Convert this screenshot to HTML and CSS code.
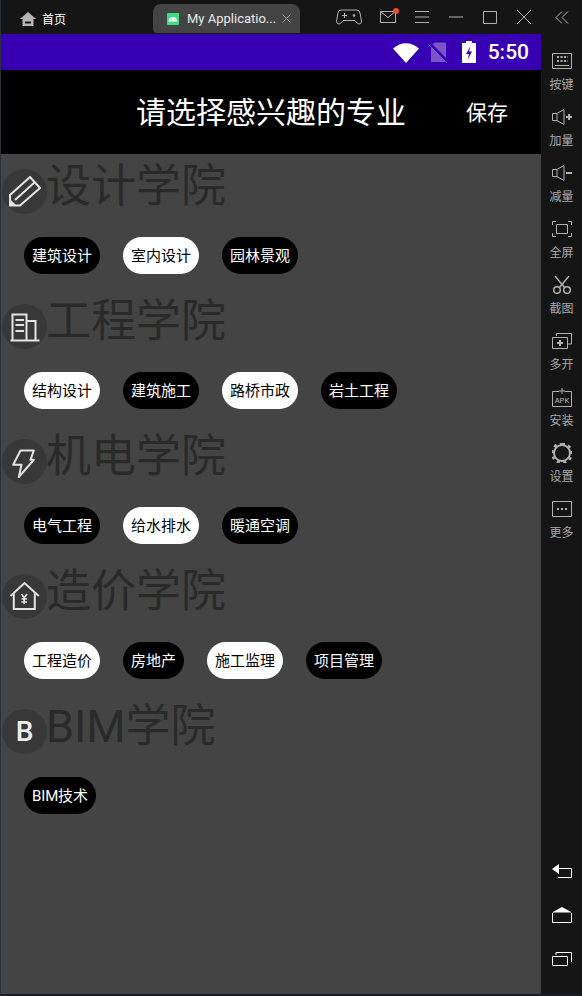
FILE: index.html
```html
<!DOCTYPE html>
<html lang="zh">
<head>
<meta charset="utf-8">
<title>My Application</title>
<link rel="stylesheet" href="styles.css">
</head>
<body>
<div class="window">
  <header class="titlebar">
    <div class="home-tab">
      <svg class="home-icon" width="16" height="14" viewBox="0 0 16 14"><path fill="#b5b5b5" d="M8 0 16 7H13.500V14H2.500V7H0Z"/><rect x="5" y="9.500" width="6" height="2" fill="#151515"/></svg>
      <span>首页</span>
    </div>
    <div class="app-tab">
      <svg class="app-icon" width="12" height="12" viewBox="0 0 12 12"><rect width="12" height="12" rx="1" fill="#3ddc84"/><path fill="#fff" d="M1.500 8.500a4.500 4.500 0 0 1 9 0Z"/><circle cx="4" cy="6.700" r=".6" fill="#3ddc84"/><circle cx="8" cy="6.700" r=".6" fill="#3ddc84"/></svg>
      <span class="app-name">My Applicatio...</span>
      <svg class="tab-close" width="9" height="9" viewBox="0 0 9 9"><path d="M.5.500l8 8M8.500.500l-8 8" stroke="#9a9a9a" fill="none"/></svg>
    </div>
    <div class="win-controls">
      <svg class="ctl-game" width="26" height="16" viewBox="0 0 26 16"><path fill="none" stroke="#b0b0b0" d="M5 1H21Q23.500 1 24 4L25.500 12Q25.500 15 23 15 21.500 15 19 11.500H7Q4.500 15 3 15 .5 15 .5 12L2 4Q2.500 1 5 1ZM6 6.500H11M8.500 4V9"/><circle cx="18" cy="6.500" r="1.300" fill="#b0b0b0"/></svg>
      <span class="mail"><svg width="16" height="12" viewBox="0 0 16 12"><path fill="none" stroke="#b0b0b0" d="M.5.500H15.500V11.500H.5ZM.5.500 8 6.500 15.500.5"/></svg><i class="mail-dot"></i></span>
      <svg width="14" height="12" viewBox="0 0 14 12"><path stroke="#b0b0b0" d="M0 .5H14M0 6H14M0 11.500H14"/></svg>
      <svg width="14" height="2" viewBox="0 0 14 2"><path stroke="#b0b0b0" d="M0 1H14"/></svg>
      <svg width="14" height="13" viewBox="0 0 14 13"><path fill="none" stroke="#b0b0b0" d="M.5.500H13.500V12.500H.5Z"/></svg>
      <svg width="14" height="14" viewBox="0 0 14 14"><path stroke="#b0b0b0" d="M0 0 14 14M14 0 0 14"/></svg>
    </div>
    <div class="collapse">
      <svg width="14" height="13" viewBox="0 0 14 13"><path fill="none" stroke="#a8a8a8" d="M7 .5 1 6.500 7 12.500M13 .5 7 6.500 13 12.500"/></svg>
    </div>
  </header>
  <div class="body-row">
    <main class="phone">
      <div class="statusbar">
        <svg width="26" height="21" viewBox="0 0 26 21"><path fill="#fff" d="M0 6.500Q13-4 26 6.500L13 21Z"/></svg>
        <svg class="nosim" width="19" height="21" viewBox="0 0 19 21"><path fill="#7a55c8" d="M5.500 .5H17V20H2V4Z"/><path stroke="#3700b3" stroke-width="3" d="M0 1 19 20"/><path stroke="#7a55c8" stroke-width="1" d="M0 3 18 21"/></svg>
        <svg class="battery" width="14" height="22" viewBox="0 0 14 22"><path fill="#fff" d="M4 0H10V2H14V22H0V2H4Z"/><path fill="#3700b3" d="M8.500 5 4 13H7L5.500 19 10 10.500H7Z"/></svg>
        <span class="clock">5:50</span>
      </div>
      <div class="toolbar">
        <span></span>
        <h1 class="toolbar-title">请选择感兴趣的专业</h1>
        <span class="save">保存</span>
      </div>
      <div class="content">
        <section class="school">
          <div class="school-head">
            <span class="badge"><svg width="32" height="32" viewBox="0 0 32 32"><path fill="none" stroke="#e4e4e4" stroke-width="2" d="M1 29.500V19L21 1 31 12 11 29.500ZM6 24 26 6"/><path fill="#e4e4e4" d="M1 23 7.500 29.500H1Z"/></svg></span>
            <h2 class="school-name">设计学院</h2>
          </div>
          <div class="chips">
            <span class="chip">建筑设计</span>
            <span class="chip on">室内设计</span>
            <span class="chip">园林景观</span>
          </div>
        </section>
        <section class="school">
          <div class="school-head">
            <span class="badge"><svg width="32" height="32" viewBox="0 0 32 32"><path fill="none" stroke="#e4e4e4" stroke-width="2" d="M3.500 29V3.500H17.500V29M17.500 10H26.500V29M1.500 29.500H30.500M6.500 9H15M6.500 14H15M6.500 20H15"/></svg></span>
            <h2 class="school-name">工程学院</h2>
          </div>
          <div class="chips">
            <span class="chip on">结构设计</span>
            <span class="chip">建筑施工</span>
            <span class="chip on">路桥市政</span>
            <span class="chip">岩土工程</span>
          </div>
        </section>
        <section class="school">
          <div class="school-head">
            <span class="badge"><svg width="32" height="32" viewBox="0 0 32 32"><path fill="none" stroke="#e4e4e4" stroke-width="2" stroke-linejoin="round" d="M11.500 4.500H24.800L21.500 13.800H24.800L9.800 31 12.500 18.800H4.200Z"/></svg></span>
            <h2 class="school-name">机电学院</h2>
          </div>
          <div class="chips">
            <span class="chip">电气工程</span>
            <span class="chip on">给水排水</span>
            <span class="chip">暖通空调</span>
          </div>
        </section>
        <section class="school">
          <div class="school-head">
            <span class="badge"><svg width="32" height="32" viewBox="0 0 32 32"><path fill="none" stroke="#e4e4e4" stroke-width="2" d="M1.500 15 15.500 2 29.800 15M4.800 12.500V28H25.800V12.500"/><path fill="none" stroke="#e4e4e4" stroke-width="1.600" d="M12.500 13 15.200 17 18 13M12.500 18H18M12.500 21H18M15.200 17V23"/></svg></span>
            <h2 class="school-name">造价学院</h2>
          </div>
          <div class="chips">
            <span class="chip on">工程造价</span>
            <span class="chip">房地产</span>
            <span class="chip on">施工监理</span>
            <span class="chip">项目管理</span>
          </div>
        </section>
        <section class="school">
          <div class="school-head">
            <span class="badge badge-letter">B</span>
            <h2 class="school-name">BIM学院</h2>
          </div>
          <div class="chips">
            <span class="chip chip-latin">BIM技术</span>
          </div>
        </section>
      </div>
    </main>
    <aside class="sidebar">
      <div class="tools">
        <div class="tool"><span class="tool-icon"><svg width="20" height="16" viewBox="0 0 20 16"><path fill="none" stroke="#b0b0b0" d="M.5.500H19.500V15.500H.5ZM3 12.500H17"/><path stroke="#b0b0b0" stroke-dasharray="2 1.500" stroke-width="2" d="M5 4H16M5 8H16"/></svg></span><span>按键</span></div>
        <div class="tool"><span class="tool-icon"><svg width="20" height="16" viewBox="0 0 20 16"><path fill="none" stroke="#b0b0b0" d="M.5 4.500H5L12 .5V15.500L5 11.500H.5ZM5 4.500V11.500"/><path stroke="#b0b0b0" stroke-width="2" d="M14 8H20M17 5V11"/></svg></span><span>加量</span></div>
        <div class="tool"><span class="tool-icon"><svg width="20" height="16" viewBox="0 0 20 16"><path fill="none" stroke="#b0b0b0" d="M.5 4.500H5L12 .5V15.500L5 11.500H.5ZM5 4.500V11.500"/><path stroke="#b0b0b0" stroke-width="2" d="M14 8H20"/></svg></span><span>减量</span></div>
        <div class="tool"><span class="tool-icon"><svg width="20" height="16" viewBox="0 0 20 16"><path fill="none" stroke="#b0b0b0" d="M.5 4V.5H4M16 .5H19.500V4M19.500 12V15.500H16M4 15.500H.5V12M4.500 3.500H15.500V12.500H4.500Z"/></svg></span><span>全屏</span></div>
        <div class="tool"><span class="tool-icon"><svg width="20" height="18" viewBox="0 0 20 18"><path fill="none" stroke="#b0b0b0" stroke-width="1.500" d="M3 0 13 12M17 0 7 12"/><circle cx="5" cy="14" r="3.300" fill="none" stroke="#b0b0b0" stroke-width="1.500"/><circle cx="15" cy="14" r="3.300" fill="none" stroke="#b0b0b0" stroke-width="1.500"/></svg></span><span>截图</span></div>
        <div class="tool"><span class="tool-icon"><svg width="20" height="16" viewBox="0 0 20 16"><path fill="none" stroke="#b0b0b0" d="M4.500 3V.5H19.500V11H16M.5 4.500H15.500V15.500H.5Z"/><path stroke="#b0b0b0" stroke-width="2" d="M5 10H11M8 7V13"/></svg></span><span>多开</span></div>
        <div class="tool"><span class="tool-icon"><svg width="20" height="20" viewBox="0 0 20 20"><path fill="none" stroke="#b0b0b0" d="M7 4.500H.5V19.500H19.500V4.500H13M10 1V7M7 4H13"/><text x="10" y="16" font-size="8" font-family="Liberation Mono" fill="#b0b0b0" text-anchor="middle">APK</text></svg></span><span>安装</span></div>
        <div class="tool"><span class="tool-icon"><svg width="20" height="20" viewBox="0 0 20 20"><circle cx="10" cy="10" r="8" fill="none" stroke="#b0b0b0" stroke-width="2"/><path stroke="#b0b0b0" stroke-width="3" stroke-dasharray="3 3.300" fill="none" d="M10 0.500A9.500 9.500 0 1 1 9.900 0.500"/></svg></span><span>设置</span></div>
        <div class="tool"><span class="tool-icon"><svg width="20" height="16" viewBox="0 0 20 16"><path fill="none" stroke="#b0b0b0" d="M.5.500H19.500V15.500H.5Z"/><path stroke="#b0b0b0" stroke-width="2" stroke-dasharray="2 2" d="M5 8H15"/></svg></span><span>更多</span></div>
      </div>
      <div class="nav-keys">
        <svg width="20" height="14" viewBox="0 0 20 14"><path fill="#fff" d="M0 5 7 0V10Z"/><path fill="none" stroke="#fff" d="M7 4.500H19.500V13.500H6"/></svg>
        <svg width="20" height="16" viewBox="0 0 20 16"><path fill="#fff" d="M0 5.500 10 0 20 5.500Z"/><path fill="none" stroke="#fff" d="M.5 6V15.500H19.500V6"/></svg>
        <svg width="20" height="14" viewBox="0 0 20 14"><path fill="none" stroke="#fff" d="M4 3V.5H19.500V10M.5 4.500H15.500V13.500H.5Z"/></svg>
      </div>
    </aside>
  </div>
</div>
</body>
</html>
```
FILE: styles.css
```css
* { box-sizing: border-box; }
html, body { margin: 0; padding: 0; }
body {
  width: 582px;
  height: 996px;
  overflow: hidden;
  background: #151515;
  font-family: Roboto, "Noto Sans CJK SC", sans-serif;
}
.window {
  display: flex;
  flex-direction: column;
  height: 996px;
  border-left: 1px solid #2a2f38;
  border-bottom: 2px solid #1a1d22;
}
.titlebar {
  display: flex;
  align-items: flex-start;
  height: 34px;
  flex: none;
  background: #151515;
  color: #fff;
  font-family: "Noto Sans CJK SC", sans-serif;
}
.home-tab {
  display: flex;
  align-items: center;
  gap: 6px;
  width: 152px;
  height: 29px;
  margin-top: 4px;
  padding: 0 0 0 19px;
  font-size: 12px;
}
.app-tab {
  display: flex;
  align-items: center;
  width: 147px;
  height: 29px;
  margin-top: 4px;
  padding: 0 9px 0 14px;
  background: #444;
  border-radius: 8px 8px 0 4px;
  font-family: Roboto, sans-serif;
  font-size: 13px;
  color: #e8e8e8;
}
.app-name { margin-left: 8px; flex: 1; white-space: nowrap; }
.win-controls {
  display: flex;
  align-items: center;
  gap: 20px;
  height: 34px;
  width: 241px;
  padding: 0 0 0 36px;
}
.ctl-game { margin-right: -2px; }
.mail { display: flex; position: relative; margin-right: -1px; }
.mail-dot {
  position: absolute;
  top: -3px;
  right: -3px;
  width: 6px;
  height: 6px;
  border-radius: 50%;
  background: #f04a30;
}
.collapse {
  display: flex;
  align-items: center;
  justify-content: center;
  width: 41px;
  height: 34px;
}
.body-row { display: flex; flex: 1; min-height: 0; }
.phone { display: flex; flex-direction: column; width: 540px; flex: none; background: #444; }
.statusbar {
  display: flex;
  align-items: center;
  justify-content: flex-end;
  height: 36px;
  flex: none;
  background: #3700b3;
  padding-right: 12px;
}
.nosim { margin-left: 10px; }
.battery { margin-left: 14px; }
.clock { margin-left: 12px; color: #fff; font-size: 21px; font-weight: 500; }
.toolbar {
  display: grid;
  grid-template-columns: 1fr auto 1fr;
  align-items: center;
  height: 84px;
  flex: none;
  background: #000;
  color: #fff;
}
.toolbar-title {
  margin: 0;
  padding-bottom: 4px;
  font-size: 30px;
  font-weight: 400;
  line-height: 1.2;
  font-family: "Noto Sans CJK SC", sans-serif;
}
.save {
  justify-self: end;
  padding: 0 33px 2px 0;
  font-size: 21px;
  font-family: "Noto Sans CJK SC", sans-serif;
}
.content { flex: 1; }
.school { display: flex; flex-direction: column; height: 135px; }
.school-head { display: flex; height: 83px; padding-left: 1px; }
.badge {
  display: flex;
  align-items: center;
  justify-content: center;
  width: 45px;
  height: 45px;
  margin-top: 15px;
  border-radius: 50%;
  background: #383838;
  flex: none;
}
.badge-letter { color: #eee; font-size: 28px; font-weight: 500; }
.school-name {
  margin: 0 0 0 -1px;
  color: #2a2a2a;
  font-size: 45px;
  font-weight: 400;
  line-height: 66px;
  white-space: nowrap;
}
.chips { display: flex; gap: 23px; padding-left: 23px; }
.chip {
  display: flex;
  align-items: center;
  height: 37px;
  padding: 0 8px 3px;
  border-radius: 18.5px;
  background: #000;
  color: #fff;
  font-size: 15px;
  white-space: nowrap;
}
.chip.on { background: #fff; color: #000; }
.chip-latin { letter-spacing: -.15px; }
.sidebar {
  display: flex;
  flex-direction: column;
  justify-content: space-between;
  width: 41px;
  flex: none;
  background: #151515;
  padding: 17px 0 28px;
}
.tools { display: flex; flex-direction: column; }
.tool {
  display: flex;
  flex-direction: column;
  align-items: center;
  gap: 4px;
  height: 56px;
  color: #a8a8a8;
  font-family: "Noto Sans CJK SC", sans-serif;
  font-size: 12px;
  line-height: 18px;
}
.tool-icon { display: flex; align-items: center; justify-content: center; height: 20px; flex: none; }
.nav-keys { display: flex; flex-direction: column; align-items: center; gap: 29px; }
```
